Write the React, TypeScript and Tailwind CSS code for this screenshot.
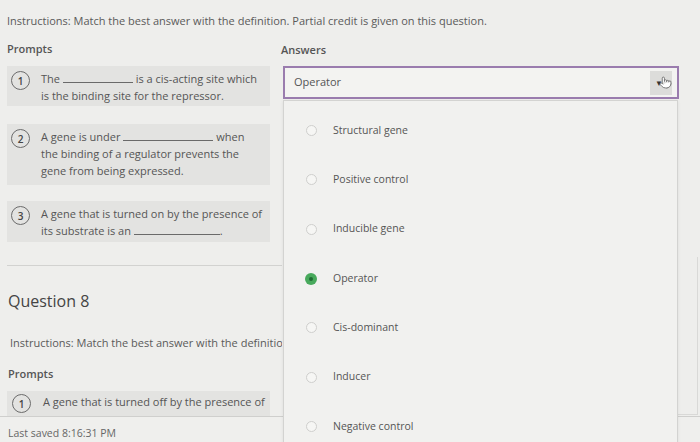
import React from 'react';
import { Pointer } from 'lucide-react';

const ANSWER_OPTIONS = [
  { label: 'Structural gene', selected: false },
  { label: 'Positive control', selected: false },
  { label: 'Inducible gene', selected: false },
  { label: 'Operator', selected: true },
  { label: 'Cis-dominant', selected: false },
  { label: 'Inducer', selected: false },
  { label: 'Negative control', selected: false },
];

const Blank = ({ width }: { width: string }) => (
  <span className={`inline-block border-b border-[#6a6a6a] align-baseline ${width}`} />
);

const NumberBadge = ({ n }: { n: number }) => (
  <div className="w-[19px] h-[19px] shrink-0 rounded-full border-[1.5px] border-[#6b6b6b] flex items-center justify-center text-[10px] font-semibold text-[#444] leading-none">
    {n}
  </div>
);

const PromptBox = ({ n, height, children }: { n: number; height: string; children: React.ReactNode }) => (
  <div className={`bg-[#e3e3e1] flex items-start pl-[4px] pt-[5px] ${height}`}>
    <NumberBadge n={n} />
    <div className="ml-[11px] text-[11px] leading-[17px] text-[#555] -mt-[1px] whitespace-nowrap">{children}</div>
  </div>
);

export default function App() {
  return (
    <div
      className="relative w-[700px] h-[442px] overflow-hidden bg-[#eeeeec] text-[#555]"
      style={{ fontFamily: '"Open Sans", "Noto Sans", sans-serif' }}
    >
      <div className="pl-[7px] pt-[14px]">
        <p className="text-[11px] leading-[14px] whitespace-nowrap text-[#5a5a5a]">
          Instructions: Match the best answer with the definition. Partial credit is given on this question.
        </p>

        <div className="flex mt-[14px]">
          {/* Prompts */}
          <div className="w-[263px]">
            <h3 className="text-[11px] font-semibold leading-[14px] text-[#555]">Prompts</h3>
            <div className="mt-[10px] flex flex-col">
              <PromptBox n={1} height="h-[40px]">
                The <Blank width="w-[70px]" /> is a cis-acting site which
                <br />
                is the binding site for the repressor.
              </PromptBox>
              <div className="mt-[18px]">
                <PromptBox n={2} height="h-[61px]">
                  A gene is under <Blank width="w-[90px]" /> when
                  <br />
                  the binding of a regulator prevents the
                  <br />
                  gene from being expressed.
                </PromptBox>
              </div>
              <div className="mt-[16px]">
                <PromptBox n={3} height="h-[41px]">
                  A gene that is turned on by the presence of
                  <br />
                  its substrate is an <Blank width="w-[86px]" />.
                </PromptBox>
              </div>
            </div>
          </div>

          {/* Answers */}
          <div className="ml-[11px]">
            <h3 className="text-[11px] font-semibold leading-[14px] text-[#555] mt-[1px]">Answers</h3>
            <div className="mt-[9px] ml-[2px] w-[396px] h-[33px] border-2 border-[#9a7cae] bg-[#f3f3f1] flex items-center justify-between pl-[9px] pr-[5px]">
              <span className="text-[11px] text-[#555]">Operator</span>
              <div className="relative w-[22px] h-[24px] bg-[#dcdcda] flex items-center justify-center">
                <span className="text-[8px] text-[#333] leading-none -ml-[4px]">▼</span>
                <Pointer className="absolute left-[9px] top-[5px] w-[13px] h-[13px] text-[#666] fill-white" strokeWidth={1.6} />
              </div>
            </div>
          </div>
        </div>

        <div className="mt-[23px] w-[275px] border-t border-[#d2d2d0]" />

        {/* Question 8 */}
        <div className="w-[275px] overflow-hidden">
          <h2 className="mt-[25px] ml-[1px] text-[16px] leading-[20px] text-[#444]">Question 8</h2>
          <p className="mt-[25px] ml-[3px] text-[11px] leading-[14px] whitespace-nowrap text-[#5a5a5a]">
            Instructions: Match the best answer with the definition
          </p>
          <h3 className="mt-[17px] ml-[1px] text-[11px] font-semibold leading-[14px] text-[#555]">Prompts</h3>
          <div className="mt-[10px] w-[263px] h-[30px] bg-[#e3e3e1] flex items-start pl-[5px] pt-[3px]">
            <NumberBadge n={1} />
            <span className="ml-[12px] text-[11px] leading-[17px] text-[#555] -mt-[1px] whitespace-nowrap">
              A gene that is turned off by the presence of
            </span>
          </div>
        </div>
      </div>

      {/* Footer */}
      <div className="absolute left-0 right-0 top-[416px] bottom-0 border-t border-[#cfcfcd] bg-[#efefed] pl-[8px] pt-[10px]">
        <p className="text-[10.5px] text-[#666] leading-[13px]">Last saved 8:16:31 PM</p>
      </div>

      {/* Right edge panel */}
      <div className="absolute left-[678px] top-[257px] w-[20px] h-[158px] border-r border-b border-[#d9d9d7]" />

      {/* Dropdown list */}
      <div className="absolute left-[283px] top-[100px] w-[395px] h-[360px] bg-[#f1f1ef] border border-[#d3d3d1] shadow-[0_1px_3px_rgba(0,0,0,0.08)] pt-[5px]">
        {ANSWER_OPTIONS.map((opt) => (
          <div key={opt.label} className="h-[49.3px] flex items-center pl-[21px]">
            <div className="w-[12px] h-[12px] flex items-center justify-center">
              {opt.selected ? (
                <div className="w-[12px] h-[12px] rounded-full bg-[#48a95c] flex items-center justify-center">
                  <div className="w-[4px] h-[4px] rounded-full bg-[#1f6b33]" />
                </div>
              ) : (
                <div className="w-[11px] h-[11px] rounded-full border border-[#cfcfcd] bg-[#f6f6f4]" />
              )}
            </div>
            <span className="ml-[16px] text-[10.5px] text-[#555]">{opt.label}</span>
          </div>
        ))}
      </div>
    </div>
  );
}
